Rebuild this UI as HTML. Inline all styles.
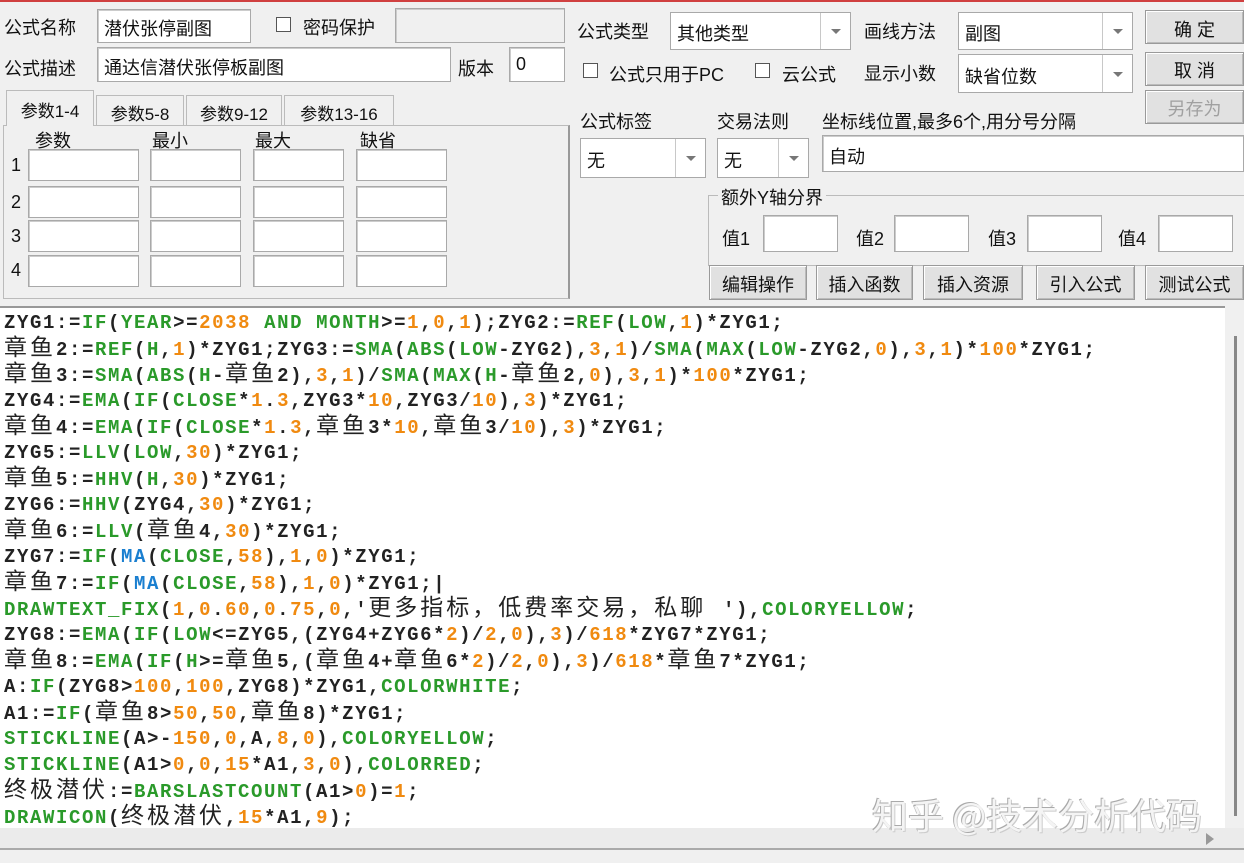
<!DOCTYPE html>
<html><head><meta charset="utf-8"><style>
*{box-sizing:border-box;margin:0;padding:0}
body{width:1244px;height:863px;overflow:hidden;background:#f0f0f0;position:relative;font-family:"Liberation Sans","Noto Sans CJK SC",sans-serif;font-size:18px;color:#111}
.a{position:absolute;white-space:nowrap}
.in{position:absolute;background:#fff;border:1px solid #a9a9a9;box-shadow:inset 1px 1px 0 #ccc}
.ck{position:absolute;width:15px;height:15px;background:#fff;border:1px solid #555}
.sel{position:absolute;background:#fff;border:1px solid #a9a9a9}
.sel i{position:absolute;right:0;top:0;bottom:0;width:30px;border-left:1px solid #c8c8c8}
.sel i:after{content:"";position:absolute;left:10px;top:50%;margin-top:-2px;border:5px solid transparent;border-top:5px solid #777}
.btn{position:absolute;background:#e1e1e1;border:1px solid #9a9a9a;box-shadow:inset 1px 1px 0 #fff,inset -1px -1px 0 #bbb;text-align:center;font-size:18px}
.tab{position:absolute;border:1px solid #bbb;border-bottom:none;text-align:center;font-size:17px}
#ed{position:absolute;left:0;top:306px;width:1225px;height:522px;background:#fff;border-top:2px solid #999;overflow:hidden;font-family:"Liberation Mono","Noto Sans CJK SC",monospace;font-weight:bold;font-size:19px;letter-spacing:1.6px;line-height:26px;padding:2px 0 0 4px;color:#222}
#ed div{white-space:pre;height:26px}
.g{color:#2a9a2a}.o{color:#f08a10}.b{color:#1a7fd0}
.c{font-weight:normal;letter-spacing:3px;font-size:23px;color:#222}
</style></head><body>
<div class="a" style="left:0;top:0;width:1244px;height:2px;background:#d04040"></div>
<div class="a" style="left:4px;top:14px">公式名称</div>
<div class="in" style="left:97px;top:9px;width:154px;height:34px"></div><div class="a" style="left:104px;top:15px">潜伏张停副图</div>
<div class="ck" style="left:276px;top:17px"></div><div class="a" style="left:303px;top:14px">密码保护</div>
<div class="in" style="left:395px;top:8px;width:170px;height:35px;background:#f0f0f0"></div>
<div class="a" style="left:4px;top:55px">公式描述</div>
<div class="in" style="left:97px;top:47px;width:354px;height:35px"></div><div class="a" style="left:104px;top:54px">通达信潜伏张停板副图</div>
<div class="a" style="left:458px;top:55px">版本</div>
<div class="in" style="left:509px;top:47px;width:56px;height:35px"></div><div class="a" style="left:516px;top:54px">0</div>
<div class="tab" style="left:6px;top:90px;width:88px;height:36px;background:#f0f0f0;padding-top:6px;z-index:2">参数1-4</div>
<div class="tab" style="left:96px;top:95px;width:88px;height:30px;padding-top:4px">参数5-8</div>
<div class="tab" style="left:186px;top:95px;width:96px;height:30px;padding-top:4px">参数9-12</div>
<div class="tab" style="left:284px;top:95px;width:110px;height:30px;padding-top:4px">参数13-16</div>
<div class="a" style="left:3px;top:125px;width:567px;height:174px;border:1px solid #bbb;border-right:2px solid #999"></div>
<div class="a" style="left:35px;top:127px">参数</div><div class="a" style="left:152px;top:127px">最小</div><div class="a" style="left:255px;top:127px">最大</div><div class="a" style="left:360px;top:127px">缺省</div>
<div class="a" style="left:11px;top:155px">1</div><div class="a" style="left:11px;top:192px">2</div><div class="a" style="left:11px;top:226px">3</div><div class="a" style="left:11px;top:260px">4</div>
<div class="in" style="left:28px;top:149px;width:111px;height:32px"></div><div class="in" style="left:150px;top:149px;width:91px;height:32px"></div><div class="in" style="left:253px;top:149px;width:91px;height:32px"></div><div class="in" style="left:356px;top:149px;width:91px;height:32px"></div>
<div class="in" style="left:28px;top:186px;width:111px;height:32px"></div><div class="in" style="left:150px;top:186px;width:91px;height:32px"></div><div class="in" style="left:253px;top:186px;width:91px;height:32px"></div><div class="in" style="left:356px;top:186px;width:91px;height:32px"></div>
<div class="in" style="left:28px;top:220px;width:111px;height:32px"></div><div class="in" style="left:150px;top:220px;width:91px;height:32px"></div><div class="in" style="left:253px;top:220px;width:91px;height:32px"></div><div class="in" style="left:356px;top:220px;width:91px;height:32px"></div>
<div class="in" style="left:28px;top:255px;width:111px;height:32px"></div><div class="in" style="left:150px;top:255px;width:91px;height:32px"></div><div class="in" style="left:253px;top:255px;width:91px;height:32px"></div><div class="in" style="left:356px;top:255px;width:91px;height:32px"></div>

<div class="a" style="left:577px;top:18px">公式类型</div>
<div class="sel" style="left:670px;top:12px;width:181px;height:38px"><i></i></div><div class="a" style="left:677px;top:20px">其他类型</div>
<div class="a" style="left:864px;top:18px">画线方法</div>
<div class="sel" style="left:958px;top:12px;width:175px;height:38px"><i></i></div><div class="a" style="left:965px;top:20px">副图</div>
<div class="btn" style="left:1145px;top:10px;width:99px;height:34px;padding-top:5px">确 定</div>
<div class="ck" style="left:583px;top:63px"></div><div class="a" style="left:609px;top:61px">公式只用于PC</div>
<div class="ck" style="left:755px;top:63px"></div><div class="a" style="left:782px;top:61px">云公式</div>
<div class="a" style="left:864px;top:60px">显示小数</div>
<div class="sel" style="left:958px;top:54px;width:175px;height:39px"><i></i></div><div class="a" style="left:965px;top:63px">缺省位数</div>
<div class="btn" style="left:1145px;top:52px;width:99px;height:34px;padding-top:4px">取 消</div>
<div class="btn" style="left:1145px;top:90px;width:99px;height:34px;padding-top:4px;color:#a0a0a0">另存为</div>
<div class="a" style="left:580px;top:108px">公式标签</div><div class="a" style="left:717px;top:108px">交易法则</div><div class="a" style="left:822px;top:108px">坐标线位置,最多6个,用分号分隔</div>
<div class="sel" style="left:580px;top:138px;width:126px;height:40px"><i></i></div><div class="a" style="left:587px;top:147px">无</div>
<div class="sel" style="left:717px;top:138px;width:92px;height:40px"><i></i></div><div class="a" style="left:724px;top:147px">无</div>
<div class="in" style="left:822px;top:135px;width:422px;height:37px"></div><div class="a" style="left:829px;top:143px">自动</div>
<div class="a" style="left:708px;top:195px;width:540px;height:71px;border:1px solid #bbb"></div>
<div class="a" style="left:718px;top:184px;background:#f0f0f0;padding:0 3px">额外Y轴分界</div>
<div class="a" style="left:722px;top:225px">值1</div><div class="in" style="left:763px;top:215px;width:75px;height:37px"></div>
<div class="a" style="left:856px;top:225px">值2</div><div class="in" style="left:894px;top:215px;width:75px;height:37px"></div>
<div class="a" style="left:988px;top:225px">值3</div><div class="in" style="left:1027px;top:215px;width:75px;height:37px"></div>
<div class="a" style="left:1118px;top:225px">值4</div><div class="in" style="left:1158px;top:215px;width:75px;height:37px"></div>
<div class="btn" style="left:709px;top:265px;width:98px;height:35px;padding-top:5px">编辑操作</div>
<div class="btn" style="left:816px;top:265px;width:97px;height:35px;padding-top:5px">插入函数</div>
<div class="btn" style="left:923px;top:265px;width:100px;height:35px;padding-top:5px">插入资源</div>
<div class="btn" style="left:1036px;top:265px;width:99px;height:35px;padding-top:5px">引入公式</div>
<div class="btn" style="left:1145px;top:265px;width:99px;height:35px;padding-top:5px">测试公式</div>

<div id="ed">
<div>ZYG1:=IF(YEAR>=2038 AND MONTH>=1,0,1);ZYG2:=REF(LOW,1)*ZYG1;</div>
<div>章鱼2:=REF(H,1)*ZYG1;ZYG3:=SMA(ABS(LOW-ZYG2),3,1)/SMA(MAX(LOW-ZYG2,0),3,1)*100*ZYG1;</div>
<div>章鱼3:=SMA(ABS(H-章鱼2),3,1)/SMA(MAX(H-章鱼2,0),3,1)*100*ZYG1;</div>
<div>ZYG4:=EMA(IF(CLOSE*1.3,ZYG3*10,ZYG3/10),3)*ZYG1;</div>
<div>章鱼4:=EMA(IF(CLOSE*1.3,章鱼3*10,章鱼3/10),3)*ZYG1;</div>
<div>ZYG5:=LLV(LOW,30)*ZYG1;</div>
<div>章鱼5:=HHV(H,30)*ZYG1;</div>
<div>ZYG6:=HHV(ZYG4,30)*ZYG1;</div>
<div>章鱼6:=LLV(章鱼4,30)*ZYG1;</div>
<div>ZYG7:=IF(MA(CLOSE,58),1,0)*ZYG1;</div>
<div>章鱼7:=IF(MA(CLOSE,58),1,0)*ZYG1;|</div>
<div>DRAWTEXT_FIX(1,0.60,0.75,0,'更多指标，低费率交易，私聊 '),COLORYELLOW;</div>
<div>ZYG8:=EMA(IF(LOW<=ZYG5,(ZYG4+ZYG6*2)/2,0),3)/618*ZYG7*ZYG1;</div>
<div>章鱼8:=EMA(IF(H>=章鱼5,(章鱼4+章鱼6*2)/2,0),3)/618*章鱼7*ZYG1;</div>
<div>A:IF(ZYG8>100,100,ZYG8)*ZYG1,COLORWHITE;</div>
<div>A1:=IF(章鱼8>50,50,章鱼8)*ZYG1;</div>
<div>STICKLINE(A>-150,0,A,8,0),COLORYELLOW;</div>
<div>STICKLINE(A1>0,0,15*A1,3,0),COLORRED;</div>
<div>终极潜伏:=BARSLASTCOUNT(A1>0)=1;</div>
<div>DRAWICON(终极潜伏,15*A1,9);</div>
</div>
<div class="a" style="left:1225px;top:306px;width:19px;height:522px;background:#f0f0f0"></div>
<div class="a" style="left:1234px;top:336px;width:3px;height:480px;background:#888"></div>
<div class="a" style="left:0;top:828px;width:1244px;height:22px;background:#ebebeb;border-bottom:2px solid #aaa"></div>
<div class="a" style="left:1206px;top:833px;border:6px solid transparent;border-left:8px solid #999"></div>
<div class="a" style="left:872px;top:788px;font-size:36px;color:#f4f4f4;text-shadow:-1px -1px 0 #aaa,1px 1px 0 #ccc;font-family:'Noto Sans CJK SC',sans-serif">知乎 @技术分析代码</div>
<script>
var G=/^(IF|YEAR|AND|MONTH|REF|LOW|H|SMA|ABS|MAX|EMA|CLOSE|LLV|HHV|DRAWTEXT_FIX|COLORYELLOW|COLORWHITE|STICKLINE|COLORRED|BARSLASTCOUNT|DRAWICON)$/;
document.querySelectorAll('#ed div').forEach(function(d){
 var t=d.textContent,h='';
 t.replace(/'[^']*'|[\u4e00-\u9fff][\u4e00-\u9fff0-9]*|[A-Za-z_][A-Za-z_0-9]*|[0-9]+|[\s\S]/g,function(m){
  var e=m.replace(/&/g,'&amp;').replace(/</g,'&lt;').replace(/>/g,'&gt;');
  if(m[0]=="'"){h+="'<span class=c>"+e.slice(1,-1)+"</span>'";}
  else if(/^[\u4e00-\u9fff]/.test(m)){var p=m.match(/^([\u4e00-\u9fff]+)(.*)$/);h+='<span class=c>'+p[1]+'</span>'+p[2];}
  else if(m=='MA')h+='<span class=b>MA</span>';
  else if(G.test(m))h+='<span class=g>'+e+'</span>';
  else if(/^[0-9]+$/.test(m))h+='<span class=o>'+e+'</span>';
  else h+=e;});
 d.innerHTML=h;});
</script>
</body></html>
